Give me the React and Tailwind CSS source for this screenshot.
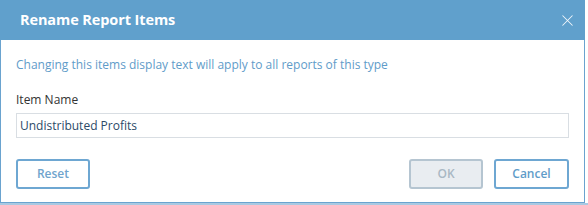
import { X } from "lucide-react";

function App() {
    return (
        <div className="w-[588px] h-[205px] bg-white overflow-hidden" style={{ fontFamily: '"Open Sans", "Noto Sans", sans-serif' }}>
            <div className="flex">
                <div className="w-[585px] h-[203px] border-l border-b border-r border-[#6aa3cf] flex flex-col">
                    <header className="h-[40px] bg-[#60a0cc] flex items-center justify-between pl-5 pr-[8px] -mx-px">
                        <h1 className="text-white text-[14.5px] font-bold tracking-[-0.1px]">Rename Report Items</h1>
                        <X className="w-[19px] h-[19px] text-white/90" strokeWidth={1.3} />
                    </header>

                    <div className="px-[15px] pt-4 flex flex-col">
                        <p className="text-[12px] leading-[18px] text-[#5f9cc9]">
                            Changing this items display text will apply to all reports of this type
                        </p>
                        <label className="mt-[17px] text-[12px] leading-[18px] text-[#333333]">Item Name</label>
                        <input
                            className="mt-[4px] h-[25px] w-full border border-[#d9dee3] px-[3px] text-[12px] text-[#2c4a68] outline-none"
                            defaultValue="Undistributed Profits"
                        />
                        <div className="mt-[21px] flex items-center w-full">
                            <button className="w-[74px] h-[30px] rounded-[3px] border-2 border-[#6ea7d2] text-[12px] font-semibold text-[#6fa4cd] bg-white">
                                Reset
                            </button>
                            <div className="ml-auto flex gap-[11px]">
                                <button className="w-[74px] h-[30px] rounded-[3px] border-2 border-[#b5c5d1] bg-[#e9edf1] text-[12px] font-semibold text-[#a9b8c4]" disabled>
                                    OK
                                </button>
                                <button className="w-[75px] h-[30px] rounded-[3px] border-2 border-[#6ea7d2] text-[12px] font-semibold text-[#5f9cc9] bg-white">
                                    Cancel
                                </button>
                            </div>
                        </div>
                    </div>
                </div>
            </div>
            <div className="h-[2px] bg-[#a9c9e2]" />
        </div>
    );
}

export default App;
